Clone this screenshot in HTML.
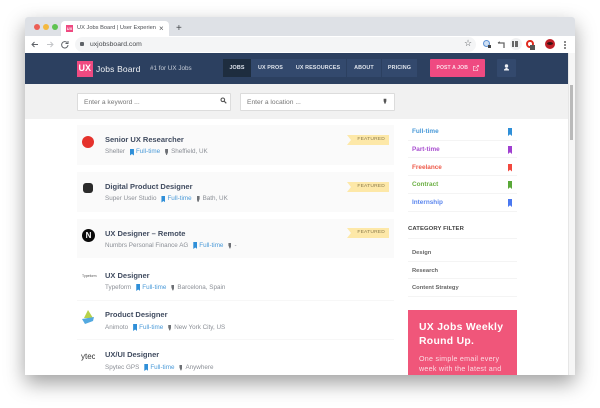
<!DOCTYPE html>
<html><head><meta charset="utf-8">
<style>
html,body{margin:0;padding:0;background:#fff}
body{width:600px;height:408px;overflow:hidden;position:relative;font-family:"Liberation Sans",sans-serif}
.a{position:absolute;white-space:nowrap}
#shadow{position:absolute;left:25px;top:17px;width:550px;height:358px;box-shadow:0 8px 20px rgba(0,0,0,.38);border-radius:3px 3px 0 0}
#win{position:absolute;left:25px;top:17px;width:550px;height:358px;background:#fff;overflow:hidden;border-radius:3px 3px 0 0;filter:blur(.3px)}
.job{position:absolute;left:52px;width:317px}
.jt{position:absolute;left:28px;font-size:7.5px;font-weight:bold;color:#414c60;line-height:10px;white-space:nowrap}
.jm{position:absolute;left:28px;height:8px;line-height:8px;font-size:6.3px;color:#8b8f96;white-space:nowrap;display:flex;align-items:center}
.jm b{font-weight:normal;color:#4a9ad8}
.bm{display:inline-block;width:4px;height:7px;background:#2f8fd8;clip-path:polygon(0 0,100% 0,100% 100%,50% 78%,0 100%);margin:0 2px 0 5px}
.pin{display:inline-block;width:3px;height:6px;background:#6d7075;clip-path:polygon(0 0,100% 0,100% 50%,60% 100%,40% 100%,0 50%);margin:0 3px 0 5px}
.feat{position:absolute;left:270px;width:42px;height:10px;background:#fde8a8;clip-path:polygon(0 0,100% 0,100% 100%,0 100%,4px 50%);font-size:4.9px;color:#8a7a4c;letter-spacing:.2px;line-height:10px;text-align:right}
.feat span{margin-right:4px}
.t{position:absolute;left:387px;font-size:6.4px;line-height:7.5px;font-weight:bold;white-space:nowrap}
.g{font-size:5.8px;color:#666}
.line{position:absolute;left:383px;width:109px;height:1px;background:#f4f4f4}
.nv{position:absolute;height:18px;line-height:19.5px;background:#33496d;color:#dfe4ec;font-size:5.4px;font-weight:bold;text-align:center;letter-spacing:.1px}
</style></head>
<body>
<div id="shadow"></div>
<div id="win">
  <!-- tab strip -->
  <div class="a" style="left:0;top:0;width:550px;height:19px;background:#dee1e6"></div>
  <div class="a" style="left:9px;top:7px;width:6px;height:6px;border-radius:50%;background:#ec5f56"></div>
  <div class="a" style="left:18px;top:7px;width:6px;height:6px;border-radius:50%;background:#f4b93f"></div>
  <div class="a" style="left:27px;top:7px;width:6px;height:6px;border-radius:50%;background:#5fc351"></div>
  <div class="a" style="left:36px;top:4px;width:108px;height:15px;background:#fff;border-radius:4px 4px 0 0"></div>
  <div class="a" style="left:41px;top:8px;width:7px;height:7px;background:#ef4a81;color:#fff;font-size:4px;line-height:7px;text-align:center;font-weight:bold">UX</div>
  <div class="a" style="left:52px;top:7px;width:79px;overflow:hidden;font-size:5.7px;line-height:9px;color:#4c4f54">UX Jobs Board | User Experien</div>
  <div class="a" style="left:134px;top:6.5px;font-size:8px;line-height:9px;color:#55585c">×</div>
  <div class="a" style="left:151px;top:6px;font-size:10px;line-height:12px;color:#44474b">+</div>
  <!-- toolbar -->
  <div class="a" style="left:0;top:19px;width:550px;height:17px;background:#fff"></div>
  <svg class="a" style="left:6px;top:22px" width="40" height="11" viewBox="0 0 40 11" fill="none" stroke-width="1"><path d="M7 5.500H1M3.500 3L1 5.500 3.500 8" stroke="#5f6368"/><path d="M16 5.500h6M19.500 3L22 5.500 19.500 8" stroke="#c3c5c8"/><path d="M36 3.500A3.200 3.200 0 1 0 37 6" stroke="#5f6368"/><path d="M37 2v2.500h-2.500" stroke="#5f6368"/></svg>
  <div class="a" style="left:50px;top:20px;width:401px;height:15px;border-radius:8px;background:#f4f5f6"></div>
  <div class="a" style="left:55px;top:25px;width:4px;height:4px;border-radius:1px;background:#5f6368"></div>
  <div class="a" style="left:65px;top:22px;font-size:6.8px;line-height:11px;color:#45484c">uxjobsboard.com</div>
  <div class="a" style="left:439px;top:20px;font-size:9px;line-height:13px;color:#55585c">☆</div>
  <div class="a" style="left:458px;top:23px;width:7px;height:7px;border-radius:50%;border:1px solid #5f93d4;box-sizing:border-box;background:#cfe0f4"></div>
  <div class="a" style="left:463px;top:28px;width:3px;height:3px;background:#444"></div>
  <div class="a" style="left:485px;top:20.5px;width:12px;height:12px;border-radius:50%;background:#f1f2f3"></div>
  <svg class="a" style="left:472px;top:23px" width="28" height="9" viewBox="0 0 28 9"><path d="M1 3h6v5M1 3l2-1" fill="none" stroke="#666" stroke-width="1.3"/><path d="M15 1h2v6h-2zM18 1h3v6h-3z" fill="#666"/></svg>
  <div class="a" style="left:501px;top:22.5px;width:7.5px;height:8px;border-radius:50%;border:2px solid #e02b20;box-sizing:border-box"></div>
  <div class="a" style="left:505px;top:28px;width:5px;height:5px;background:#555"></div>
  <div class="a" style="left:520px;top:21.5px;width:10px;height:10px;border-radius:50%;background:#bf1f28"></div>
  <div class="a" style="left:522px;top:25px;width:6px;height:3px;background:#3a1414;border-radius:50%"></div>
  <div class="a" style="left:539px;top:23.5px;width:2px;height:2px;border-radius:50%;background:#666;box-shadow:0 3px 0 #666,0 6px 0 #666"></div>
  <!-- nav -->
  <div class="a" style="left:0;top:36px;width:543px;height:30.5px;background:#2c4060;border-bottom:1px solid #1f2f49"></div>
  <div style="position:absolute;left:0;top:21px;width:543px;height:50px">
    <div class="a" style="left:52px;top:23px;width:15.5px;height:15.5px;background:#ef4a81;color:#fff;font-size:9px;font-weight:bold;line-height:15.5px;text-align:center">UX</div>
    <div class="a" style="left:71px;top:24px;font-size:8.5px;line-height:14px;color:#f0f2f5;letter-spacing:.15px">Jobs Board</div>
    <div class="a" style="left:125px;top:25.5px;font-size:6.3px;line-height:10px;color:#c7cdd8">#1 for UX Jobs</div>
    <div class="nv" style="left:198px;top:21px;width:28px;background:#1e2d3f">JOBS</div>
    <div class="nv" style="left:226px;top:21px;width:39px">UX PROS</div>
    <div class="nv" style="left:265px;top:21px;width:56px">UX RESOURCES</div>
    <div class="nv" style="left:322px;top:21px;width:34px">ABOUT</div>
    <div class="nv" style="left:357px;top:21px;width:35px">PRICING</div>
    <div class="nv" style="left:405px;top:21px;width:54.5px;background:#ef4a81;color:#fbdce7;border-radius:1px;text-align:left;text-indent:6.5px;font-size:5.1px">POST A JOB</div>
    <svg class="a" style="left:448px;top:26.5px" width="6" height="6" viewBox="0 0 7 7" fill="none" stroke="#fbdce7" stroke-width=".8"><path d="M5.500 4v2.500H.5V1.500H3M3 4l3.500-3.500M4.500.5h2v2"/></svg>
    <div class="nv" style="left:472px;top:21px;width:19px;border-radius:1px"></div>
    <svg class="a" style="left:478px;top:26px" width="7" height="7" viewBox="0 0 7 7"><circle cx="3.500" cy="2" r="1.700" fill="#eef0f4"/><path d="M1 6.500h5V5.500L4 4H3L1 5.500z" fill="#eef0f4"/></svg>
  </div>
  <!-- search band -->
  <div class="a" style="left:0;top:67px;width:543px;height:34.5px;background:#f1f1f1"></div>
  <div class="a" style="left:52px;top:76px;width:154px;height:17.5px;box-sizing:border-box;background:#fff;border:1px solid #dcdcdc;border-radius:1px;font-size:6.7px;line-height:17.5px;color:#777;text-indent:6px">Enter a keyword ...</div>
  <svg class="a" style="left:195px;top:80px" width="7" height="7" viewBox="0 0 7 7" fill="none" stroke="#555" stroke-width="1.100"><circle cx="2.800" cy="2.800" r="1.800"/><path d="M4.200 4.200L6.300 6.300"/></svg>
  <div class="a" style="left:215px;top:76px;width:155px;height:17.5px;box-sizing:border-box;background:#fff;border:1px solid #dcdcdc;border-radius:1px;font-size:6.7px;line-height:17.5px;color:#777;text-indent:6px">Enter a location ...</div>
  <svg class="a" style="left:357.5px;top:81px" width="4" height="7" viewBox="0 0 5 7"><path d="M.8 0h3.400v3L2.900 6.500H2.100L.8 3z" fill="#555"/></svg>
  <!-- scrollbar -->
  <div class="a" style="left:543px;top:36px;width:7px;height:322px;background:#f6f6f6;border-left:1px solid #e6e6e6;box-sizing:border-box"></div>
  <div class="a" style="left:545px;top:68px;width:3px;height:55px;background:#b9b9b9"></div>
  <!-- jobs -->
  <div class="job" style="top:108px;height:40px;background:#fafafa"></div>
  <div class="job" style="top:155px;height:40px;background:#fafafa"></div>
  <div class="job" style="top:202px;height:38.5px;background:#fafafa"></div>
  <div class="job" style="top:283px;height:1px;background:#f7f7f7"></div>
  <div class="job" style="top:322px;height:1px;background:#f7f7f7"></div>
  <div style="position:absolute;left:52px;top:0;width:317px;height:358px">
    <div class="a" style="left:5px;top:119px;width:12px;height:12px;border-radius:50%;background:#e5322c"></div>
    <div class="a" style="left:6px;top:166px;width:10px;height:10px;border-radius:3px;background:#2b2b2b"></div>
    <div class="a" style="left:5px;top:212px;width:13px;height:13px;border-radius:50%;background:#0a0a0a;color:#fff;font-size:8px;font-weight:bold;line-height:13px;text-align:center">N</div>
    <div class="a" style="left:5px;top:256px;font-size:3.5px;line-height:6px;color:#555">Typeform</div>
    <svg class="a" style="left:5px;top:293px" width="13" height="14" viewBox="0 0 13 14"><path d="M6 0L2 8l9 0z" fill="#b7d24a"/><path d="M0 9l12-2-1 4-8 3z" fill="#53a9e0"/></svg>
    <div class="a" style="left:4px;top:335px;font-size:8px;line-height:10px;width:14px;overflow:hidden;color:#333">ytec</div>

    <div class="jt" style="top:118px">Senior UX Researcher</div>
    <div class="jm" style="top:131px">Shelter<i class="bm"></i><b>Full-time</b><i class="pin"></i>Sheffield, UK</div>
    <div class="feat" style="top:118px"><span>FEATURED</span></div>

    <div class="jt" style="top:165px">Digital Product Designer</div>
    <div class="jm" style="top:178px">Super User Studio<i class="bm"></i><b>Full-time</b><i class="pin"></i>Bath, UK</div>
    <div class="feat" style="top:165px"><span>FEATURED</span></div>

    <div class="jt" style="top:212px">UX Designer – Remote</div>
    <div class="jm" style="top:224.5px">Numbrs Personal Finance AG<i class="bm"></i><b>Full-time</b><i class="pin"></i>-</div>
    <div class="feat" style="top:211px"><span>FEATURED</span></div>

    <div class="jt" style="top:253.5px">UX Designer</div>
    <div class="jm" style="top:266.5px">Typeform<i class="bm"></i><b>Full-time</b><i class="pin"></i>Barcelona, Spain</div>

    <div class="jt" style="top:293px">Product Designer</div>
    <div class="jm" style="top:306.5px">Animoto<i class="bm"></i><b>Full-time</b><i class="pin"></i>New York City, US</div>

    <div class="jt" style="top:333px">UX/UI Designer</div>
    <div class="jm" style="top:346.5px">Spytec GPS<i class="bm"></i><b>Full-time</b><i class="pin"></i>Anywhere</div>
  </div>
  <!-- sidebar -->
  <div class="t" style="top:111px;color:#4a9ad8">Full-time</div>
  <div class="t" style="top:129px;color:#a94fd0">Part-time</div>
  <div class="t" style="top:147px;color:#ee5a4a">Freelance</div>
  <div class="t" style="top:164px;color:#6cb044">Contract</div>
  <div class="t" style="top:182px;color:#5b86ee">Internship</div>
  <i class="bm a" style="left:483px;top:111px;margin:0;height:8px;background:#2f8fd8"></i>
  <i class="bm a" style="left:483px;top:129px;margin:0;height:8px;background:#a03fd0"></i>
  <i class="bm a" style="left:483px;top:146.5px;margin:0;height:8px;background:#f2483e"></i>
  <i class="bm a" style="left:483px;top:164px;margin:0;height:8px;background:#5aa838"></i>
  <i class="bm a" style="left:483px;top:182px;margin:0;height:8px;background:#4a78f0"></i>
  <div class="line" style="top:123px"></div>
  <div class="line" style="top:140px"></div>
  <div class="line" style="top:158px"></div>
  <div class="line" style="top:176px"></div>
  <div class="line" style="top:194px"></div>
  <div class="a" style="left:383px;top:208px;font-size:5.9px;line-height:9px;font-weight:bold;color:#444;letter-spacing:.1px">CATEGORY FILTER</div>
  <div class="line" style="top:221px"></div>
  <div class="t g" style="top:233px">Design</div>
  <div class="t g" style="top:250.5px">Research</div>
  <div class="t g" style="top:268px">Content Strategy</div>
  <div class="line" style="top:244px"></div>
  <div class="line" style="top:261px"></div>
  <div class="line" style="top:279px"></div>
  <div class="a" style="left:383px;top:293px;width:109px;height:65px;background:#f0567a"></div>
  <div class="a" style="left:394px;top:304px;font-size:10.4px;line-height:13.5px;font-weight:bold;color:#fff;letter-spacing:.3px">UX Jobs Weekly<br>Round Up.</div>
  <div class="a" style="left:394px;top:338px;font-size:7.1px;line-height:9.5px;color:#fbdbe3;letter-spacing:.28px">One simple email every<br>week with the latest and</div>
</div>
</body></html>
